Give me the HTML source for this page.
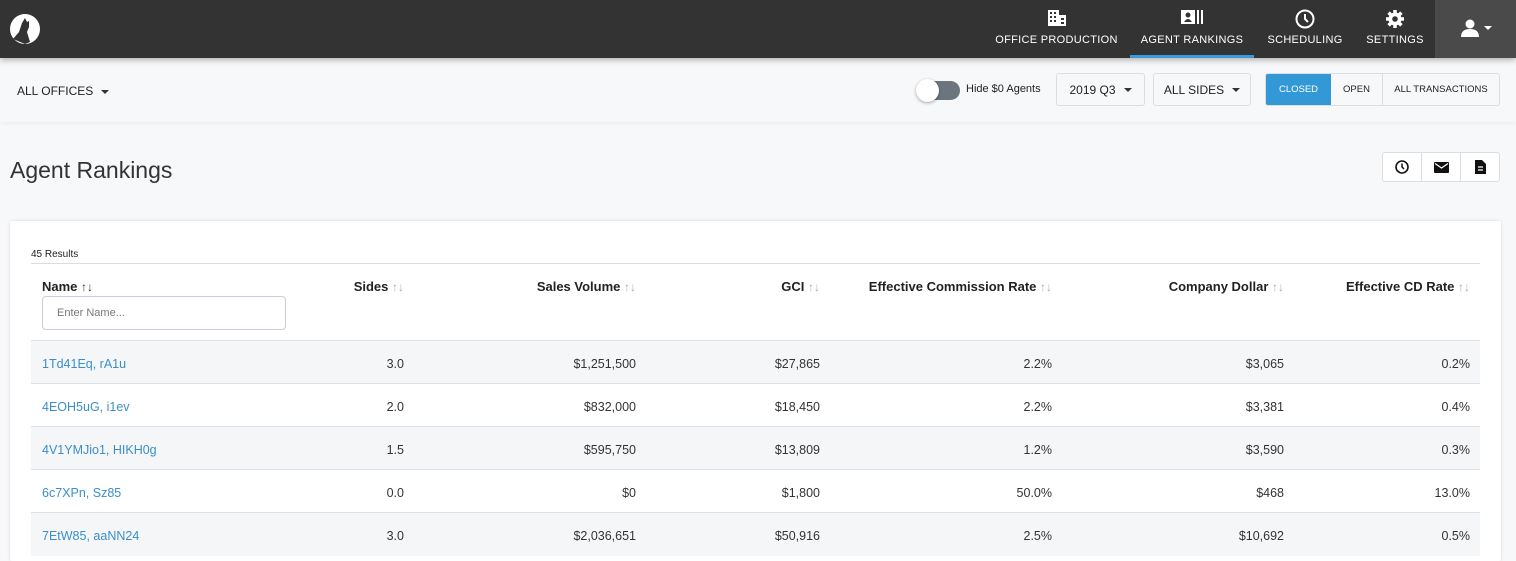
<!DOCTYPE html>
<html><head><meta charset="utf-8"><style>
*{box-sizing:border-box;margin:0;padding:0}
body{width:1516px;height:547px;overflow:hidden;background:#f7f8fa;font-family:"Liberation Sans",sans-serif;color:#222;position:relative}
.hdr{position:absolute;left:0;top:0;width:1516px;height:58px;background:#333;box-shadow:0 2px 6px rgba(0,0,0,.3);z-index:2}
.nav{position:absolute;top:0;height:58px;color:#fff;font-size:11px;letter-spacing:.3px;text-align:center}
.nav .ic{position:absolute;top:9px;left:50%;transform:translateX(-50%)}
.nav .t{position:absolute;top:34px;left:0;right:0;white-space:nowrap}
.user{position:absolute;left:1435px;top:0;width:81px;height:58px;background:#4a4a4a}
.sub{position:absolute;top:58px;left:0;width:1516px;height:64px;background:#f7f8fa;box-shadow:0 2px 4px rgba(0,0,0,.04)}
.btn{position:absolute;top:73px;height:33px;border:1px solid #ddd;border-radius:3px;background:#f7f8fa;font-size:12px;display:flex;align-items:center;justify-content:center}
.car{display:inline-block;border-left:4px solid transparent;border-right:4px solid transparent;border-top:4px solid #333;margin-left:8px;vertical-align:middle}
.card{position:absolute;left:10px;top:221px;width:1491px;height:340px;background:#fff;box-shadow:0 0 3px rgba(0,0,0,.12);border-radius:2px}
table{position:absolute;left:21px;top:42px;width:1449px;border-collapse:collapse;font-size:12.5px}
th{font-weight:bold;text-align:right;vertical-align:top;padding-top:15px;height:77px;font-size:13px;border-top:1px solid #ddd}
th .s{color:#aab;font-weight:normal;font-size:12px}
td{text-align:right;height:43px;border-top:1px solid #dee2e6;padding-right:10px;color:#333;padding-top:3px}
th{padding-right:10px}
td:first-child,th:first-child{text-align:left;padding-left:11px}
td a{color:#3a8fc8;text-decoration:none}
tbody tr:nth-child(odd){background:#f5f6f8}
</style></head><body>
<div class="hdr">
<svg style="position:absolute;left:10px;top:14px" width="30" height="30" viewBox="0 0 30 30"><circle cx="15" cy="15" r="15" fill="#fff"/><path d="M3 25 L9 18 L12 9 L15 4 L17 8 L19 7 L19 13 L17 18 L20 28 L15 30 Z" fill="#333"/></svg>
<div class="nav" style="left:990px;width:133px"><svg class="ic" width="20" height="18" viewBox="0 0 20 18"><rect x="1" y="1" width="11" height="16" fill="#fff"/><rect x="12" y="6" width="7" height="11" fill="#fff"/><g fill="#333"><rect x="3" y="3" width="2" height="2"/><rect x="7" y="3" width="2" height="2"/><rect x="3" y="7" width="2" height="2"/><rect x="7" y="7" width="2" height="2"/><rect x="3" y="11" width="2" height="2"/><rect x="7" y="11" width="2" height="2"/><rect x="14" y="9" width="3" height="2"/><rect x="14" y="13" width="3" height="2"/></g></svg><div class="t">OFFICE PRODUCTION</div></div>
<div class="nav" style="left:1130px;width:124px;border-bottom:3px solid #3a9bd8"><svg class="ic" width="22" height="16" viewBox="0 0 22 16"><rect x="0" y="1" width="14" height="14" fill="#fff"/><circle cx="7" cy="6" r="2.5" fill="#333"/><path d="M3 13 Q7 7 11 13Z" fill="#333"/><rect x="16" y="1" width="2" height="14" fill="#fff"/><rect x="20" y="1" width="2" height="14" fill="#fff"/></svg><div class="t">AGENT RANKINGS</div></div>
<div class="nav" style="left:1262px;width:86px"><svg class="ic" width="20" height="20" viewBox="0 0 20 20"><circle cx="10" cy="10" r="8.5" fill="none" stroke="#fff" stroke-width="2"/><path d="M10 5 V10 L13 13" fill="none" stroke="#fff" stroke-width="2"/></svg><div class="t">SCHEDULING</div></div>
<div class="nav" style="left:1350px;width:90px"><svg class="ic" width="20" height="20" viewBox="0 0 20 20"><circle cx="10" cy="10" r="6.5" fill="#fff"/><g stroke="#fff" stroke-width="3.5"><path d="M10 1V19M1 10H19M3.6 3.6L16.4 16.4M16.4 3.6L3.6 16.4"/></g><circle cx="10" cy="10" r="2.8" fill="#333"/></svg><div class="t">SETTINGS</div></div>
<div class="user"><svg style="position:absolute;left:25px;top:19px" width="20" height="18" viewBox="0 0 20 18"><circle cx="10" cy="5" r="4.5" fill="#fff"/><path d="M1 18 Q1 10 10 10 Q19 10 19 18Z" fill="#fff"/></svg><span class="car" style="position:absolute;left:41px;top:26px;border-top-color:#fff"></span></div>
</div>
<div class="sub"></div>
<div style="position:absolute;left:17px;top:84px;font-size:12px">ALL OFFICES<span class="car"></span></div>
<div style="position:absolute;left:917px;top:81px;width:43px;height:19px;border-radius:10px;background:#6c757d"></div>
<div style="position:absolute;left:916px;top:79px;width:23px;height:23px;border-radius:50%;background:#fff;box-shadow:0 1px 3px rgba(0,0,0,.35)"></div>
<div style="position:absolute;left:966px;top:83px;font-size:11px">Hide $0 Agents</div>
<div class="btn" style="left:1056px;width:89px">2019 Q3<span class="car"></span></div>
<div class="btn" style="left:1153px;width:98px">ALL SIDES<span class="car"></span></div>
<div class="btn" style="left:1265px;width:235px;justify-content:flex-start;font-size:9.5px;overflow:hidden">
<div style="width:65px;height:100%;background:#3399d6;color:#fff;display:flex;align-items:center;justify-content:center">CLOSED</div>
<div style="width:52px;height:100%;border-right:1px solid #ddd;display:flex;align-items:center;justify-content:center">OPEN</div>
<div style="flex:1;height:100%;display:flex;align-items:center;justify-content:center">ALL TRANSACTIONS</div></div>
<div style="position:absolute;left:10px;top:157px;font-size:23px;color:#333">Agent Rankings</div>
<div style="position:absolute;left:1382px;top:152px;width:118px;height:30px;border:1px solid #ddd;border-radius:3px;background:#fff;display:flex">
<div style="flex:1;border-right:1px solid #ddd;display:flex;align-items:center;justify-content:center"><svg width="14" height="14" viewBox="0 0 14 14"><circle cx="7" cy="7" r="6" fill="none" stroke="#111" stroke-width="1.6"/><path d="M7 3.5V7L9 9" fill="none" stroke="#111" stroke-width="1.5"/></svg></div>
<div style="flex:1;border-right:1px solid #ddd;display:flex;align-items:center;justify-content:center"><svg width="15" height="11" viewBox="0 0 15 11"><rect width="15" height="11" rx="1" fill="#111"/><path d="M1 1.5L7.5 6L14 1.5" fill="none" stroke="#fff" stroke-width="1.3"/></svg></div>
<div style="flex:1;display:flex;align-items:center;justify-content:center"><svg width="11" height="14" viewBox="0 0 11 14"><path d="M0 0H7L11 4V14H0Z" fill="#111"/><path d="M3 7H8M3 10H8" stroke="#fff" stroke-width="1.3"/></svg></div></div>
<div class="card">
<div style="position:absolute;left:21px;top:28px;font-size:10px">45 Results</div>
<table><thead><tr>
<th style="width:270px">Name <span class="s" style="color:#333">↑↓</span><div style="margin-top:2px;width:244px;height:34px;border:1px solid #ccd;border-radius:4px;font-weight:normal;font-size:11px;color:#777;padding:10px 14px">Enter Name...</div></th>
<th style="width:113px">Sides <span class="s">↑↓</span></th>
<th style="width:232px">Sales Volume <span class="s">↑↓</span></th>
<th style="width:184px">GCI <span class="s">↑↓</span></th>
<th style="width:232px">Effective Commission Rate <span class="s">↑↓</span></th>
<th style="width:232px">Company Dollar <span class="s">↑↓</span></th>
<th>Effective CD Rate <span class="s">↑↓</span></th></tr></thead>
<tbody>
<tr><td><a>1Td41Eq, rA1u</a></td><td>3.0</td><td>$1,251,500</td><td>$27,865</td><td>2.2%</td><td>$3,065</td><td>0.2%</td></tr>
<tr><td><a>4EOH5uG, i1ev</a></td><td>2.0</td><td>$832,000</td><td>$18,450</td><td>2.2%</td><td>$3,381</td><td>0.4%</td></tr>
<tr><td><a>4V1YMJio1, HIKH0g</a></td><td>1.5</td><td>$595,750</td><td>$13,809</td><td>1.2%</td><td>$3,590</td><td>0.3%</td></tr>
<tr><td><a>6c7XPn, Sz85</a></td><td>0.0</td><td>$0</td><td>$1,800</td><td>50.0%</td><td>$468</td><td>13.0%</td></tr>
<tr><td><a>7EtW85, aaNN24</a></td><td>3.0</td><td>$2,036,651</td><td>$50,916</td><td>2.5%</td><td>$10,692</td><td>0.5%</td></tr>
</tbody></table></div>
</body></html>
